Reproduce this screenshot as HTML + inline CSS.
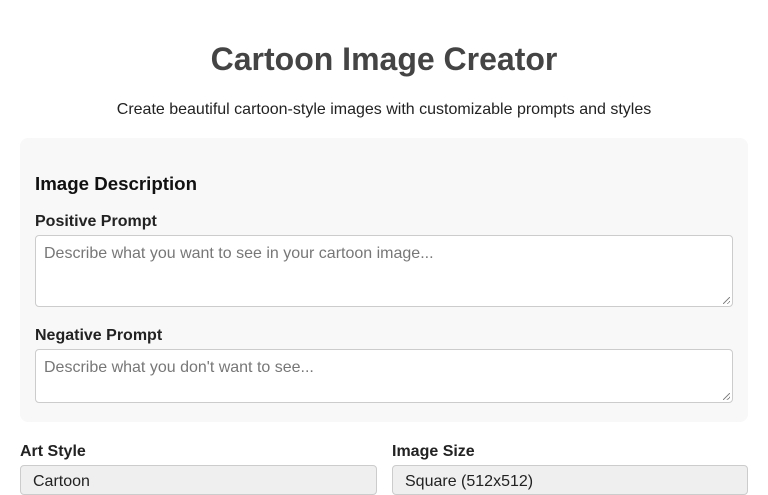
<!DOCTYPE html>
<html><head><meta charset="utf-8"><style>
*{box-sizing:border-box;margin:0;padding:0}
body{width:768px;height:480px;overflow:hidden;background:#fff;font-family:"Liberation Sans",Arial,sans-serif;color:#222}
h1{position:absolute;left:0;width:768px;top:39px;text-align:center;font-size:32px;font-weight:bold;color:#444;line-height:40px}
.sub{position:absolute;left:0;width:768px;top:100px;text-align:center;font-size:16px;color:#222;line-height:20px}
.panel{position:absolute;left:20px;top:138px;width:728px;height:284px;background:#f8f8f8;border-radius:8px}
h2{position:absolute;left:35px;top:173px;font-size:18.7px;font-weight:bold;color:#111;line-height:22px}
.lbl{position:absolute;left:35px;font-size:16px;font-weight:bold;color:#222;line-height:20px}
.ta{position:absolute;left:35px;width:698px;background:#fff;border:1px solid #ccc;border-radius:4px;font-size:16px;color:#777;padding:8px 8px 6px;line-height:20px}
.ta:after{content:"";position:absolute;right:2px;bottom:2px;width:7px;height:7px;background:linear-gradient(135deg,transparent 45%,#888 45%,#888 55%,transparent 55%,transparent 75%,#888 75%,#888 85%,transparent 85%)}
.sel{position:absolute;top:465px;height:30px;background:#efefef;border:1px solid #ccc;border-radius:4px;font-size:16px;color:#222;padding:7px 12px}
</style></head><body>
<h1>Cartoon Image Creator</h1>
<div class="sub">Create beautiful cartoon-style images with customizable prompts and styles</div>
<div class="panel"></div>
<h2>Image Description</h2>
<div class="lbl" style="top:212px">Positive Prompt</div>
<div class="ta" style="top:235px;height:72px">Describe what you want to see in your cartoon image...</div>
<div class="lbl" style="top:326px">Negative Prompt</div>
<div class="ta" style="top:349px;height:54px">Describe what you don't want to see...</div>
<div class="lbl" style="top:442px;left:20px">Art Style</div>
<div class="lbl" style="top:442px;left:392px">Image Size</div>
<div class="sel" style="left:20px;width:357px">Cartoon</div>
<div class="sel" style="left:392px;width:356px">Square (512x512)</div>
</body></html>
